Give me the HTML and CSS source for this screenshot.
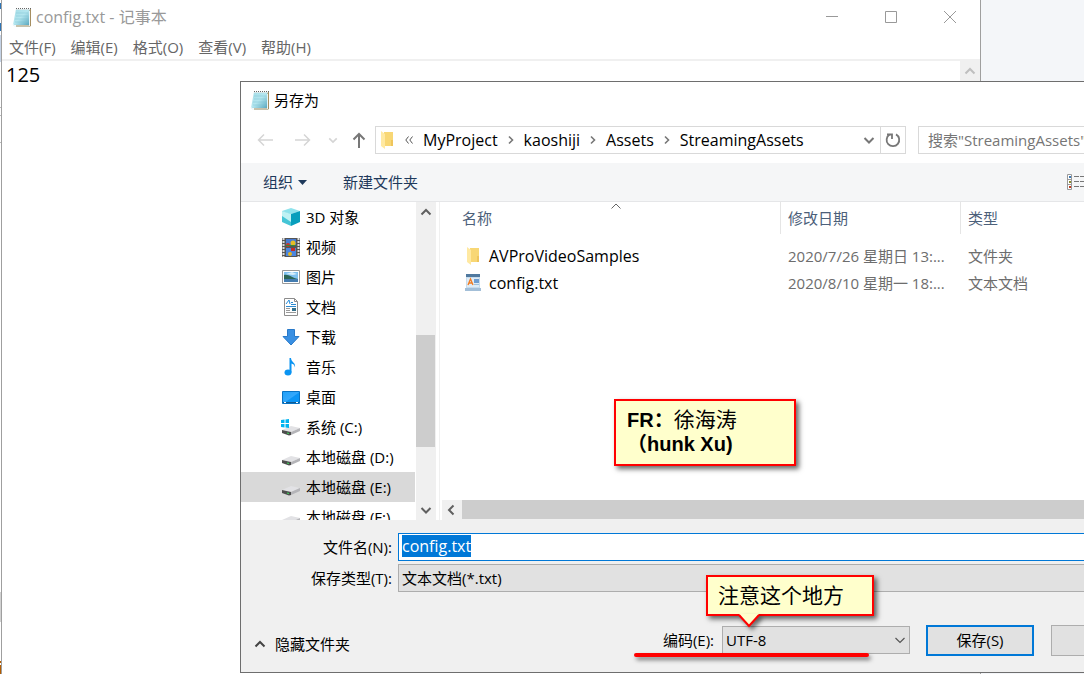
FILE: index.html
```html
<!DOCTYPE html>
<html lang="zh-CN">
<head>
    <meta charset="UTF-8">
    <meta name="viewport" content="width=device-width, initial-scale=1.0">
    <title>config.txt - 记事本</title>
    <link rel="stylesheet" href="styles.css">
</head>
<body>
    <svg class="defs" width="0" height="0">
        <defs>
            <linearGradient id="paper" x1="0" y1="0" x2="1" y2="1">
                <stop offset="0" stop-color="#a5dce6"/>
                <stop offset="0.5" stop-color="#b4e6ef"/>
                <stop offset="1" stop-color="#58a6bd"/>
            </linearGradient>
            <linearGradient id="screen" x1="0" y1="0" x2="1" y2="1">
                <stop offset="0" stop-color="#1fa0f8"/>
                <stop offset="0.5" stop-color="#35a8fb"/>
                <stop offset="0.55" stop-color="#0c95f5"/>
                <stop offset="1" stop-color="#0c95f5"/>
            </linearGradient>
        </defs>
        <symbol id="notepad" viewBox="0 0 20 20">
            <path d="M4 2h15v17l-2 1H4z" fill="#a58e61"/>
            <path d="M4 2h13.500v16H1z" fill="url(#paper)"/>
            <path d="M1 17l1 2h15.500V4" fill="none" stroke="#e8f5f7"/>
            <path d="M4 1.500h15" stroke="#666" stroke-dasharray="1 1"/>
            <path d="M4 2.500h14" stroke="#d7e5e7"/>
            <path d="M4 6h12M4 9h12M3 12h13M3 15h13" stroke="#7fc3d1" stroke-width="0.500"/>
        </symbol>
        <symbol id="folder" viewBox="0 0 12 18">
            <path d="M3 1h9v14H3z" fill="#f8d775"/>
            <path d="M10 9h2v6h-2z" fill="#efc55c"/>
            <path d="M0 0l4 3v15l-4-3z" fill="#ffe9a2"/>
        </symbol>
        <symbol id="drive" viewBox="0 0 20 20">
            <path d="M1 13l9-4 9 2-9 4z" fill="#e2e2e5"/>
            <path d="M1 13l9 2v3l-2 .5-7-2.500z" fill="#4d4d4d"/>
            <path d="M10 15l9-4v3l-9 4z" fill="#b4b4b8"/>
            <path d="M6 15.500l2 .5v1l-2-.5z" fill="#3be05c"/>
        </symbol>
        <symbol id="up" viewBox="0 0 12 12"><path d="M1.500 8.500L6 4l4.500 4.500" fill="none" stroke="currentColor" stroke-width="2"/></symbol>
        <symbol id="down" viewBox="0 0 12 12"><path d="M1.500 4L6 8.500 10.500 4" fill="none" stroke="currentColor" stroke-width="2"/></symbol>
        <symbol id="thin-down" viewBox="0 0 12 12"><path d="M1.500 4L6 8.500 10.500 4" fill="none" stroke="currentColor" stroke-width="1.200"/></symbol>
        <symbol id="next" viewBox="0 0 8 12"><path d="M2 2.500L5.500 6 2 9.500" fill="none" stroke="currentColor" stroke-width="1.600"/></symbol>
    </svg>

    <!-- whatever peeks out on the left of the notepad window -->
    <svg class="desktop-edge" width="2" height="674">
        <path d="M0 0h2v674H0z" fill="#fff"/>
        <path d="M0 3h2v6H0zM0 23h2v8H0z" fill="#2e75b6"/>
        <path d="M0 35h2v27H0z" fill="#c5d3e6"/>
        <path d="M0 107h2v1H0zM0 115h2v1H0zM0 142h2v1H0z" fill="#bbb"/>
        <path d="M0 592h2v30H0z" fill="#d2d2d2"/>
        <path d="M0 661h2v2H0zM0 665h2v9H0z" fill="#b35c00"/>
    </svg>

    <div class="notepad">
        <div class="titlebar">
            <svg class="ico20"><use href="#notepad"/></svg>
            <span class="title">config.txt - 记事本</span>
            <button class="winbtn" aria-label="最小化"><svg width="12" height="12"><path d="M0 5.500h12" stroke="#999"/></svg></button>
            <button class="winbtn" aria-label="最大化"><svg width="12" height="12"><path d="M.5.5h11v11H.5z" fill="none" stroke="#999"/></svg></button>
            <button class="winbtn" aria-label="关闭"><svg width="12" height="12"><path d="M0 0l12 12M12 0L0 12" stroke="#999"/></svg></button>
        </div>
        <div class="menubar">
            <button>文件(F)</button>
            <button>编辑(E)</button>
            <button>格式(O)</button>
            <button>查看(V)</button>
            <button>帮助(H)</button>
        </div>
        <div class="editor">
            <textarea aria-label="文本" spellcheck="false">125</textarea>
            <div class="vscroll disabled">
                <button class="arrow" aria-label="向上"><svg class="ico12"><use href="#up"/></svg></button>
            </div>
        </div>
    </div>

    <div class="dialog">
        <div class="dialog-title">
            <svg class="ico20"><use href="#notepad"/></svg>
            <span>另存为</span>
        </div>

        <div class="navbar">
            <button class="navbtn off" aria-label="后退"><svg width="16" height="14"><path d="M16 7H1.500M7 1.500L1.500 7 7 12.500" fill="none" stroke="currentColor" stroke-width="1.500"/></svg></button>
            <button class="navbtn off" aria-label="前进"><svg width="16" height="14"><path d="M0 7h14.500M9 1.500L14.500 7 9 12.500" fill="none" stroke="currentColor" stroke-width="1.500"/></svg></button>
            <button class="navbtn recent off" aria-label="最近"><svg width="10" height="10" viewBox="0 0 12 12"><use href="#down"/></svg></button>
            <button class="navbtn go-up" aria-label="上移"><svg width="14" height="16"><path d="M7 16V2M1.500 7.500L7 2l5.500 5.500" fill="none" stroke="currentColor" stroke-width="2"/></svg></button>
            <div class="address">
                <svg class="folder"><use href="#folder"/></svg>
                <svg class="laquo" width="8" height="8"><path d="M3.500.5L.8 4l2.700 3.500M7.500.5L4.800 4l2.700 3.500" fill="none" stroke="#555"/></svg>
                <a href="#">MyProject</a>
                <svg class="sep"><use href="#next"/></svg>
                <a href="#">kaoshiji</a>
                <svg class="sep"><use href="#next"/></svg>
                <a href="#">Assets</a>
                <svg class="sep"><use href="#next"/></svg>
                <a href="#">StreamingAssets</a>
                <button class="drop" aria-label="展开"><svg class="ico12"><use href="#down"/></svg></button>
                <button class="refresh" aria-label="刷新"><svg width="16" height="16"><path d="M4.500 2.600A6.300 6.300 0 1 0 11 2.400" fill="none" stroke="#777" stroke-width="1.800"/><path d="M2 2.500h5V7" fill="none" stroke="#777" stroke-width="1.800"/></svg></button>
            </div>
            <input class="search" type="text" aria-label="搜索" placeholder='搜索"StreamingAssets"'>
        </div>

        <div class="toolbar">
            <button>组织<svg width="9" height="5"><path d="M0 0h9L4.500 5z" fill="#1e395b"/></svg></button>
            <button>新建文件夹</button>
            <button class="view" aria-label="视图">
                <svg width="24" height="16">
                    <path d="M.5.5h4v15h-4zM.5 5.500h4M.5 10.500h4" fill="#fff" stroke="#999"/>
                    <path d="M2 2h2v2H2z" fill="#3a78b5"/><path d="M2 7h2v2H2z" fill="#8a8a2a"/><path d="M2 12h2v2H2z" fill="#c0391b"/>
                    <path d="M7 2.500h17M7 7.500h17M7 12.500h17" stroke="#777" stroke-dasharray="5 1"/>
                </svg>
            </button>
        </div>

        <div class="content">
            <div class="sidebar">
                <ul class="tree">
                    <li><svg class="ico20" viewBox="0 0 20 20"><path d="M1 4l9-3 9 3-9 3z" fill="#8fe3ec"/><path d="M1 4l9 3v12l-9-4z" fill="#45c5d6"/><path d="M19 4l-9 3v12l9-4z" fill="#079ebc"/><path d="M1 4l9 3v8L1 9z" fill="#bff2f4"/></svg>3D 对象</li>
                    <li><svg class="ico20" viewBox="0 0 20 20"><path d="M1 1h18v19H1z" fill="#555"/><path d="M2.500 1v19M17.500 1v19" stroke="#ddd" stroke-width="2" stroke-dasharray="2 1"/><path d="M5 2h10v7H5z" fill="#477bd0"/><path d="M5 11h10v8H5z" fill="#4b86df"/><circle cx="12" cy="6" r="2.500" fill="#e6bd26"/><circle cx="7" cy="8" r="2" fill="#ca3526"/><circle cx="9" cy="17" r="2" fill="#e3b521"/><path d="M10 11h4v3h-4z" fill="#c52b24"/><path d="M5 8h10v1H5z" fill="#368734"/></svg>视频</li>
                    <li><svg class="ico20" viewBox="0 0 20 20"><path d="M1.500 3.500h17v13h-17z" fill="#fff" stroke="#999"/><path d="M3 5h14v10H3z" fill="#80c1ef"/><path d="M3 8c5-1 8 3 14 4v1H3z" fill="#2c6656"/><path d="M3 12h14v3H3z" fill="#447cb0"/><path d="M5 7l6-2 5 2-4 1z" fill="#d9eefa"/></svg>图片</li>
                    <li><svg class="ico20" viewBox="0 0 20 20"><path d="M3.500 1.500h10l3 3v14h-13z" fill="#fff" stroke="#8c8c8c"/><path d="M13.500 1.500v3h3" fill="none" stroke="#8c8c8c"/><path d="M5 7l3-4 1 4" fill="none" stroke="#278edb"/><path d="M10 5.500h2M10 7.500h5M5 9.500h10" stroke="#2b8ad2"/><path d="M5 11.500h4M5 13.500h4M5 15.500h10" stroke="#999"/><path d="M11 11h4v3h-4z" fill="#35718b"/></svg>文档</li>
                    <li><svg class="ico20" viewBox="0 0 20 20"><path d="M6.500 2.500h7v7h4.500L10 18 2 9.500h4.500z" fill="#3990e3" stroke="#2879c9"/></svg>下载</li>
                    <li><svg class="ico20" viewBox="0 0 20 20"><ellipse cx="7" cy="15.500" rx="3.500" ry="3" fill="#0a94f2"/><path d="M8.500 15.500V1H10c0 4 5 4.500 4 9.500C13.500 7.500 12 7 10.500 6.500v9z" fill="#0a94f2"/></svg>音乐</li>
                    <li><svg class="ico20" viewBox="0 0 20 20"><path d="M1.500 4.500h17v12h-17z" fill="url(#screen)" stroke="#0873c4"/><path d="M2 15.500h16" stroke="#125b91"/><path d="M3 15.500h2M15 15.500h2" stroke="#fff"/></svg>桌面</li>
                    <li><svg class="ico20" viewBox="0 0 20 20"><use href="#drive"/><path d="M0 3l3.500-.5V6H0zM4.500 2.400L8 2v4H4.500zM0 7h3.500v3.500L0 10zM4.500 7H8v4l-3.500-.5z" fill="#00b4f0"/></svg>系统 (C:)</li>
                    <li><svg class="ico20"><use href="#drive"/></svg>本地磁盘 (D:)</li>
                    <li class="selected"><svg class="ico20"><use href="#drive"/></svg>本地磁盘 (E:)</li>
                    <li><svg class="ico20"><use href="#drive"/></svg>本地磁盘 (F:)</li>
                </ul>
                <div class="vscroll">
                    <button class="arrow" aria-label="向上"><svg class="ico12"><use href="#up"/></svg></button>
                    <div class="track"><div class="thumb"></div></div>
                    <button class="arrow" aria-label="向下"><svg class="ico12"><use href="#down"/></svg></button>
                </div>
            </div>

            <div class="files">
                <table>
                    <thead>
                        <tr>
                            <th class="name">名称<svg class="sort" width="10" height="6"><path d="M.5 5.500L5 1l4.500 4.500" fill="none" stroke="#666"/></svg></th>
                            <th class="date">修改日期</th>
                            <th>类型</th>
                        </tr>
                    </thead>
                    <tbody>
                        <tr>
                            <td class="name"><div><svg class="folder"><use href="#folder"/></svg>AVProVideoSamples</div></td>
                            <td>2020/7/26 星期日 13:...</td>
                            <td>文件夹</td>
                        </tr>
                        <tr>
                            <td class="name"><div><svg class="txt" viewBox="0 0 16 18"><path d="M1 0h14v17H1z" fill="#c7dced"/><path d="M1 0h14v3H1z" fill="#50799f"/><path d="M2 4h12v9H2z" fill="#dfecf6"/><path d="M3 11l2.500-6L8 11M4 9h3" fill="none" stroke="#f27c21" stroke-width="1.300"/><path d="M9 5h5v4H9z" fill="#6e9dd0"/><path d="M9 10.500h5" stroke="#9cc0dd"/><path d="M0 14h16v3H0z" fill="#a3bfd8"/></svg>config.txt</div></td>
                            <td>2020/8/10 星期一 18:...</td>
                            <td>文本文档</td>
                        </tr>
                    </tbody>
                </table>
                <div class="hscroll">
                    <button class="arrow" aria-label="向左"><svg width="12" height="12"><path d="M7.500 1.500L3 6l4.500 4.500" fill="none" stroke="currentColor" stroke-width="2"/></svg></button>
                    <div class="thumb"></div>
                </div>
            </div>
        </div>

        <div class="form">
            <div class="row">
                <label for="filename">文件名(N):</label>
                <input id="filename" type="text" value="config.txt" autocomplete="off" spellcheck="false">
            </div>
            <div class="row">
                <label for="filetype">保存类型(T):</label>
                <select id="filetype"><option>文本文档(*.txt)</option></select>
            </div>
        </div>

        <div class="footer">
            <button class="toggle"><svg class="ico12"><use href="#up"/></svg>隐藏文件夹</button>
            <label for="encoding">编码(E):</label>
            <div class="combo">
                <select id="encoding"><option>UTF-8</option></select>
                <svg class="ico12"><use href="#thin-down"/></svg>
            </div>
            <button class="btn primary">保存(S)</button>
            <button class="btn" aria-label="取消"></button>
        </div>
    </div>

    <!-- annotations -->
    <div class="note author"><b>FR：</b>徐海涛<br><b>（hunk Xu)</b></div>
    <div class="note hint">注意这个地方<svg class="tail" width="22" height="14"><path d="M1 0l10 12L21 0z" fill="#ffc"/><path d="M1 1l10 11L21 1" fill="none" stroke="red" stroke-width="2"/></svg></div>
    <div class="underline"></div>

    <script>
        let filename = document.getElementById("filename");
        filename.focus();
        filename.select();
    </script>
</body>
</html>
```

FILE: styles.css
```css
* {
    box-sizing: border-box;
}

body {
    margin: 0;
    height: 100vh;
    overflow: hidden;
    position: relative;
    background: #f4f6f9;
    font-family: "Open Sans", "Noto Sans CJK SC", sans-serif;
    font-size: 15px;
    line-height: 20px;
    color: #000;
}

button, input, select, textarea {
    font: inherit;
    color: inherit;
    margin: 0;
    padding: 0;
    border: 0;
    border-radius: 0;
    background: none;
    outline: 0;
}

a {
    color: inherit;
    text-decoration: none;
}

svg {
    flex: none;
    display: block;
}

.defs {
    position: absolute;
}

.desktop-edge {
    position: absolute;
    left: 0;
    top: 0;
}

.ico20 {
    width: 20px;
    height: 20px;
}

.ico12 {
    width: 12px;
    height: 12px;
}

.folder {
    width: 12px;
    height: 18px;
}

/* Notepad window */
.notepad {
    position: absolute;
    left: 1px;
    right: 103px;
    top: 0;
    bottom: 0;
    display: flex;
    flex-direction: column;
    background: #fff;
    border: 1px solid #9f9f9f;
    border-width: 0 1px;
}

.titlebar {
    display: flex;
    align-items: center;
    height: 34px;
    padding: 0 3px 0 10px;
    gap: 4px;
    color: #999;
    font-size: 16px;
}

.titlebar .title {
    flex: 1;
}

.winbtn {
    width: 55px;
    height: 34px;
    display: flex;
    align-items: center;
    justify-content: center;
}

.menubar {
    display: flex;
    align-items: center;
    gap: 15px;
    height: 27px;
    padding: 1px 0 0 7px;
    border-bottom: 2px solid #f0f0f0;
    color: #666;
}

.editor {
    flex: 1;
    display: flex;
}

.editor textarea {
    flex: 1;
    padding: 2px 4px;
    resize: none;
    font-size: 20px;
    line-height: 24px;
}

/* Scrollbars */
.vscroll {
    width: 20px;
    display: flex;
    flex-direction: column;
    background: #f0f0f0;
    color: #606060;
}

.vscroll.disabled {
    color: #bfbfbf;
}

.arrow {
    width: 20px;
    height: 20px;
    display: flex;
    align-items: center;
    justify-content: center;
}

.track {
    flex: 1;
    display: flex;
    flex-direction: column;
    justify-content: flex-end;
    padding: 0 1px 53px 0;
}

.track .thumb {
    height: 112px;
    background: #cdcdcd;
}

.hscroll {
    display: flex;
    height: 20px;
    background: #f0f0f0;
    color: #606060;
}

.hscroll .thumb {
    flex: 1;
    height: 19px;
    background: #cdcdcd;
}

/* Save dialog, wider than the visible desktop */
.dialog {
    position: absolute;
    left: 240px;
    right: -200px;
    top: 81px;
    background: #f0f0f0;
    border: 1px solid #6e6e6e;
}

.dialog-title {
    display: flex;
    align-items: center;
    gap: 4px;
    height: 36px;
    padding-left: 9px;
    background: #fff;
}

.navbar {
    display: flex;
    align-items: center;
    height: 45px;
    padding: 0 14px 1px 16px;
    background: #fff;
}

.navbtn {
    width: 16px;
    margin-right: 22px;
    display: flex;
    justify-content: center;
    color: #777;
}

.navbtn.recent {
    width: 10px;
    margin: 0 14px 0 -5px;
}

.navbtn.go-up {
    width: 14px;
    margin-right: 9px;
}

.navbtn.off {
    color: #d5d5d5;
}

.address {
    flex: 1;
    display: flex;
    align-items: center;
    height: 28px;
    padding-left: 5px;
    border: 1px solid #d9d9d9;
    font-size: 16px;
}

.laquo {
    margin: 0 10px 0 12px;
}

.sep {
    width: 8px;
    height: 12px;
    margin: 0 9px;
    color: #777;
}

.drop {
    margin-left: auto;
    padding: 0 5px;
    color: #777;
}

.refresh {
    width: 25px;
    height: 26px;
    display: flex;
    align-items: center;
    justify-content: center;
    border-left: 1px solid #d9d9d9;
}

.search {
    width: 351px;
    height: 28px;
    margin-left: 12px;
    padding: 0 9px;
    border: 1px solid #d9d9d9;
}

.search::placeholder {
    color: #767676;
    opacity: 1;
}

.toolbar {
    display: flex;
    align-items: center;
    gap: 36px;
    height: 39px;
    padding: 0 192px 0 22px;
    background: #f5f6f7;
    border-bottom: 1px solid #e5e6e8;
    color: #1e395b;
}

.toolbar button {
    display: flex;
    align-items: center;
    gap: 5px;
}

.toolbar .view {
    margin-left: auto;
}

.content {
    display: flex;
    height: 318px;
    background: #fff;
}

.sidebar {
    display: flex;
    width: 199px;
    padding-right: 3px;
    border-right: 1px solid #f0f0f0;
}

.tree {
    flex: 1;
    margin: 0 1px 0 0;
    padding: 0;
    list-style: none;
    overflow: hidden;
    white-space: nowrap;
}

.tree li {
    display: flex;
    align-items: center;
    gap: 5px;
    height: 30px;
    padding-left: 40px;
}

.tree .selected {
    background: #d9d9d9;
}

.files {
    flex: 1;
    display: flex;
    flex-direction: column;
    justify-content: space-between;
    padding-left: 2px;
}

table {
    width: 100%;
    table-layout: fixed;
    border-collapse: separate;
    border-spacing: 0;
    color: #6d6d6d;
    white-space: nowrap;
}

th {
    height: 32px;
    padding: 0 0 0 7px;
    border-left: 1px solid #e5e5e5;
    font-weight: normal;
    text-align: left;
    color: #4c607a;
}

th.name {
    position: relative;
    width: 338px;
    padding-left: 20px;
    border-left: 0;
}

th.date {
    width: 180px;
}

.sort {
    position: absolute;
    top: 1px;
    left: 50%;
}

td {
    height: 27px;
    padding: 0 0 0 8px;
}

tbody::before {
    content: "";
    display: block;
    height: 8px;
}

td.name {
    padding-left: 23px;
    font-size: 16px;
    color: #000;
}

td.name div {
    display: flex;
    align-items: center;
}

td .folder {
    margin: 0 10px 0 2px;
}

.txt {
    width: 16px;
    height: 18px;
    margin-right: 8px;
}

.form {
    display: flex;
    flex-direction: column;
    gap: 3px;
    padding: 13px 13px 0 0;
}

.row {
    display: flex;
    align-items: center;
}

.row label {
    width: 157px;
    padding-right: 6px;
    text-align: right;
}

.row input {
    flex: 1;
    height: 28px;
    padding: 0 3px 2px;
    border: 1px solid #0078d7;
    background: #fff;
    font-size: 16px;
}

.row input::selection {
    background: #0078d7;
    color: #fff;
}

select {
    appearance: none;
    height: 28px;
    padding: 0 3px;
    border: 1px solid #adadad;
    background: #e1e1e1;
}

.row select {
    flex: 1;
}

.footer {
    display: flex;
    align-items: center;
    padding: 33px 13px 16px;
}

.toggle {
    display: flex;
    align-items: center;
    gap: 9px;
    margin-right: auto;
    padding-top: 6px;
}

.toggle svg {
    color: #444;
}

.footer label {
    margin-right: 8px;
    padding-bottom: 2px;
}

.combo {
    position: relative;
    width: 188px;
    margin-right: 16px;
    padding-bottom: 1px;
}

.combo select {
    display: block;
    width: 100%;
}

.combo svg {
    position: absolute;
    right: 4px;
    top: 8px;
    color: #555;
}

.btn {
    width: 108px;
    height: 31px;
    padding-bottom: 2px;
    background: #e1e1e1;
    border: 1px solid #adadad;
}

.btn.primary {
    margin-right: 17px;
    border: 2px solid #0078d7;
}

.btn:last-child {
    width: 219px;
}

/* Annotations drawn over the windows */
.note {
    position: absolute;
    background: #ffc;
    border: 2px solid red;
    box-shadow: 3px 3px 5px rgba(0, 0, 0, 0.6);
    font-family: "Liberation Sans", "Noto Sans CJK SC", sans-serif;
    font-size: 21px;
    line-height: 24px;
}

.note b {
    font-size: 20px;
}

.author {
    left: 614px;
    top: 399px;
    width: 182px;
    padding: 7px 11px 8px;
}

.hint {
    left: 706px;
    top: 575px;
    width: 168px;
    padding: 7px 10px 6px;
}

.tail {
    position: absolute;
    left: 30px;
    top: 100%;
    filter: drop-shadow(3px 3px 2px rgba(0, 0, 0, 0.5));
}

.underline {
    position: absolute;
    left: 634px;
    top: 653px;
    width: 235px;
    height: 4px;
    border-radius: 2px;
    background: red;
    box-shadow: 2px 3px 4px rgba(0, 0, 0, 0.5);
}
```
